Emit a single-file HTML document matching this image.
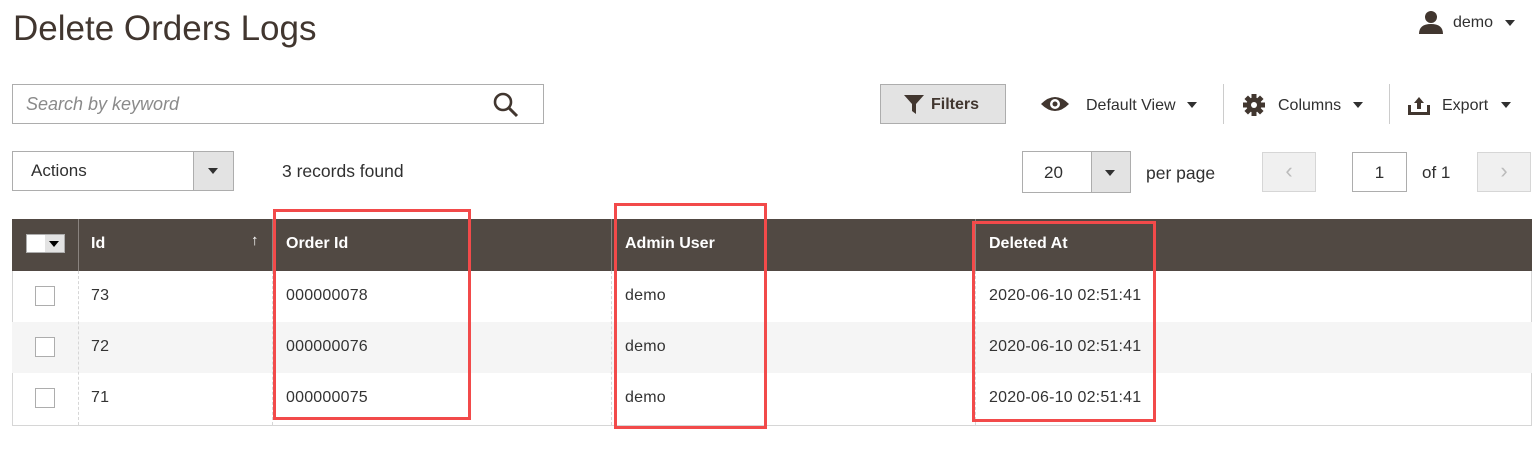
<!DOCTYPE html>
<html><head><meta charset="utf-8"><style>
*{box-sizing:border-box;margin:0;padding:0}
body{width:1537px;height:451px;background:#fff;font-family:"Liberation Sans",sans-serif;color:#303030;position:relative;overflow:hidden}
.a{position:absolute}
.t{font-size:16px;color:#303030}
.tri{display:inline-block;width:0;height:0;border-left:5px solid transparent;border-right:5px solid transparent;border-top:6px solid #303030}
.hd{color:#fff;font-weight:bold;font-size:16px}
.red{position:absolute;border:3px solid #f24a4a}
.cb{position:absolute;width:20px;height:20px;border:1px solid #adadad;background:#fff;left:35px}
.cell{position:absolute;font-size:16px;color:#333;letter-spacing:0.2px}
</style></head><body>
<div class="a" style="left:13px;top:9px;font-size:35px;color:#41362f">Delete Orders Logs</div>
<svg class="a" style="left:1418px;top:10px" width="26" height="24" viewBox="0 0 26 24"><circle cx="13" cy="7" r="6" fill="#41362f"/><path d="M1 24 Q1 14 13 14 Q25 14 25 24Z" fill="#41362f"/></svg>
<div class="a t" style="left:1453px;top:14px">demo</div>
<div class="a tri" style="left:1505px;top:20px"></div>

<div class="a" style="left:12px;top:84px;width:532px;height:40px;border:1px solid #adadad"></div>
<div class="a" style="left:26px;top:94px;font-size:18px;font-style:italic;color:#8a8a8a">Search by keyword</div>
<svg class="a" style="left:492px;top:91px" width="28" height="28" viewBox="0 0 28 28"><circle cx="11" cy="11" r="8" fill="none" stroke="#41362f" stroke-width="2.6"/><line x1="17" y1="17" x2="25" y2="25" stroke="#41362f" stroke-width="3"/></svg>

<div class="a" style="left:880px;top:84px;width:126px;height:40px;background:#e3e3e3;border:1px solid #adadad"></div>
<svg class="a" style="left:904px;top:95px" width="20" height="19" viewBox="0 0 20 19"><path d="M0 0H20L12 9V19L8 16V9Z" fill="#41362f"/></svg>
<div class="a" style="left:931px;top:96px;font-size:16px;font-weight:bold;color:#41362f">Filters</div>
<svg class="a" style="left:1040px;top:95px" width="30" height="18" viewBox="0 0 30 18"><path d="M1 9Q15 -5 29 9Q15 23 1 9Z" fill="#41362f"/><circle cx="15" cy="9" r="5" fill="#fff"/><circle cx="15" cy="9" r="2.5" fill="#41362f"/></svg>
<div class="a t" style="left:1086px;top:97px">Default View</div>
<div class="a tri" style="left:1187px;top:102px"></div>
<div class="a" style="left:1223px;top:84px;width:1px;height:40px;background:#ccc"></div>
<svg class="a" style="left:1243px;top:94px" width="22" height="22" viewBox="0 0 22 22"><g fill="#41362f"><circle cx="11" cy="11" r="7.5"/><rect x="8.5" y="0" width="5" height="22"/><rect x="0" y="8.5" width="22" height="5"/><rect x="8.5" y="0" width="5" height="22" transform="rotate(45 11 11)"/><rect x="8.5" y="0" width="5" height="22" transform="rotate(-45 11 11)"/></g><circle cx="11" cy="11" r="3" fill="#fff"/></svg>
<div class="a t" style="left:1278px;top:97px">Columns</div>
<div class="a tri" style="left:1353px;top:102px"></div>
<div class="a" style="left:1389px;top:84px;width:1px;height:40px;background:#ccc"></div>
<svg class="a" style="left:1408px;top:95px" width="22" height="20" viewBox="0 0 22 20"><path d="M0 10H3V17H19V10H22V20H0Z" fill="#41362f"/><path d="M11 2L16 8H13V14H9V8H6Z" fill="#41362f"/></svg>
<div class="a t" style="left:1442px;top:97px">Export</div>
<div class="a tri" style="left:1501px;top:102px"></div>

<div class="a" style="left:12px;top:151px;width:222px;height:40px;border:1px solid #adadad"></div>
<div class="a" style="left:193px;top:152px;width:40px;height:38px;background:#e3e3e3;border-left:1px solid #adadad"></div>
<div class="a tri" style="left:208px;top:168px"></div>
<div class="a t" style="left:31px;top:161px;font-size:17px">Actions</div>
<div class="a t" style="left:282px;top:161px;font-size:17.5px">3 records found</div>

<div class="a" style="left:1022px;top:151px;width:109px;height:42px;border:1px solid #adadad"></div>
<div class="a" style="left:1091px;top:152px;width:39px;height:40px;background:#e3e3e3;border-left:1px solid #adadad"></div>
<div class="a tri" style="left:1105px;top:170px"></div>
<div class="a t" style="left:1044px;top:163px;font-size:17px">20</div>
<div class="a t" style="left:1146px;top:163px;font-size:17.5px">per page</div>
<div class="a" style="left:1262px;top:152px;width:54px;height:40px;background:#f0f0f0;border:1px solid #d6d6d6;color:#bbb;font-size:22px;text-align:center;line-height:36px">‹</div>
<div class="a" style="left:1352px;top:152px;width:55px;height:40px;border:1px solid #adadad;text-align:center;line-height:40px;font-size:17px">1</div>
<div class="a t" style="left:1422px;top:163px;font-size:17px">of 1</div>
<div class="a" style="left:1477px;top:152px;width:54px;height:40px;background:#f0f0f0;border:1px solid #d6d6d6;color:#bbb;font-size:22px;text-align:center;line-height:36px">›</div>

<div class="a" style="left:12px;top:219px;width:1520px;height:207px;border:1px solid #d6d6d6"></div>
<div class="a" style="left:12px;top:219px;width:1520px;height:52px;background:#514943"></div>
<div class="a" style="left:12px;top:322px;width:1520px;height:51px;background:#f5f5f5"></div>
<div class="a" style="left:78px;top:219px;width:1px;height:52px;background:#8a837f"></div>
<div class="a" style="left:272px;top:219px;width:1px;height:52px;background:#8a837f"></div>
<div class="a" style="left:611px;top:219px;width:1px;height:52px;background:#8a837f"></div>
<div class="a" style="left:975px;top:219px;width:1px;height:52px;background:#8a837f"></div>
<div class="a" style="left:78px;top:271px;height:154px;border-left:1px dashed #d6d6d6"></div>
<div class="a" style="left:272px;top:271px;height:154px;border-left:1px dashed #d6d6d6"></div>
<div class="a" style="left:611px;top:271px;height:154px;border-left:1px dashed #d6d6d6"></div>
<div class="a" style="left:975px;top:271px;height:154px;border-left:1px dashed #d6d6d6"></div>
<div class="a" style="left:26px;top:234px;width:39px;height:19px;background:#fff;border:1px solid #adadad"></div>
<div class="a" style="left:45px;top:235px;width:19px;height:17px;background:#e3e3e3"></div>
<div class="a tri" style="left:49px;top:241px;border-top-color:#000"></div>
<div class="a hd" style="left:91px;top:235px">Id</div>
<div class="a" style="left:251px;top:232px;color:#fff;font-size:15px">↑</div>
<div class="a hd" style="left:286px;top:235px">Order Id</div>
<div class="a hd" style="left:625px;top:235px">Admin User</div>
<div class="a hd" style="left:989px;top:235px">Deleted At</div>

<div class="cb" style="top:286px"></div>
<div class="cb" style="top:337px"></div>
<div class="cb" style="top:388px"></div>
<div class="cell" style="left:91px;top:287px">73</div>
<div class="cell" style="left:91px;top:338px">72</div>
<div class="cell" style="left:91px;top:389px">71</div>
<div class="cell" style="left:286px;top:287px">000000078</div>
<div class="cell" style="left:286px;top:338px">000000076</div>
<div class="cell" style="left:286px;top:389px">000000075</div>
<div class="cell" style="left:625px;top:287px">demo</div>
<div class="cell" style="left:625px;top:338px">demo</div>
<div class="cell" style="left:625px;top:389px">demo</div>
<div class="cell" style="left:989px;top:287px">2020-06-10 02:51:41</div>
<div class="cell" style="left:989px;top:338px">2020-06-10 02:51:41</div>
<div class="cell" style="left:989px;top:389px">2020-06-10 02:51:41</div>

<div class="red" style="left:273px;top:209px;width:198px;height:211px"></div>
<div class="red" style="left:614px;top:203px;width:153px;height:226px"></div>
<div class="red" style="left:972px;top:221px;width:184px;height:201px"></div>
</body></html>
